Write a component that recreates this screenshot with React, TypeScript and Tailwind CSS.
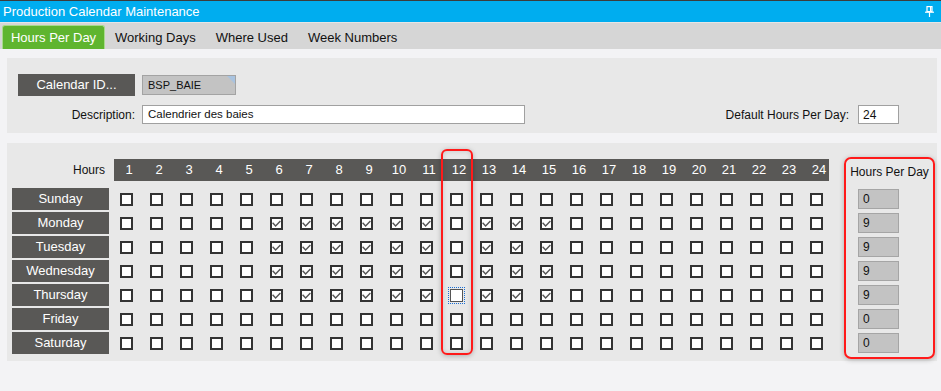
import clsx from "clsx";

const DAYS = ["Sunday", "Monday", "Tuesday", "Wednesday", "Thursday", "Friday", "Saturday"];
const HOURS = Array.from({ length: 24 }, (_, i) => i + 1);
const WORK_HOURS = [6, 7, 8, 9, 10, 11, 13, 14, 15];
const TOTALS = [0, 9, 9, 9, 9, 0, 0];
const TABS = ["Hours Per Day", "Working Days", "Where Used", "Week Numbers"];

function isChecked(day: number, hour: number) {
  return day >= 1 && day <= 4 && WORK_HOURS.includes(hour);
}

function PinIcon() {
  return (
    <svg width="9" height="11" viewBox="0 0 9 11" fill="none" stroke="white" strokeWidth="1.2">
      <rect x="2" y="0.6" width="5" height="5" />
      <line x1="5.6" y1="0.6" x2="5.6" y2="5.6" />
      <line x1="0" y1="6.2" x2="9" y2="6.2" />
      <line x1="4.5" y1="6.2" x2="4.5" y2="11" />
    </svg>
  );
}

function CheckBox({ checked, focused }: { checked: boolean; focused?: boolean }) {
  return (
    <span
      className={clsx(
        "flex h-[13px] w-[13px] items-center justify-center bg-white",
        focused
          ? "border border-[#555] outline-1 outline-offset-1 outline-dotted outline-[#1a6fd6]"
          : "border-2 border-[#333]"
      )}
    >
      {checked && (
        <svg viewBox="0 0 9 9" className="h-[9px] w-[9px]">
          <path d="M0.6 3.8 L3.6 7 L8.4 2" fill="none" stroke="#555" strokeWidth="1.4" />
        </svg>
      )}
    </span>
  );
}

export default function App() {
  return (
    <div className="h-[391px] w-[941px] overflow-hidden bg-[#f3f3f5] font-['Liberation_Sans',Arial,sans-serif] text-[#111]">
      <div className="h-px bg-[#3c3c3c]" />
      <div className="flex h-[21px] items-center justify-between bg-[#00adef] pl-[3px] pr-[7px] text-[13px] text-white">
        <span>Production Calendar Maintenance</span>
        <PinIcon />
      </div>
      <div className="h-px bg-[#e6e6e6]" />

      {/* tabs */}
      <div className="flex h-[26px] items-end bg-[#d6d6d6] pl-[2px]">
        {TABS.map((tab, i) =>
          i === 0 ? (
            <div
              key={tab}
              className="flex h-[24px] w-[103px] items-center justify-center rounded-t-[3px] border border-b-0 border-[#a8da8c] bg-[#5fb52f] text-[13px] text-white"
            >
              {tab}
            </div>
          ) : (
            <div key={tab} className="flex h-[24px] items-center px-[10px] pt-[2px] text-[13px] text-[#111]">
              {tab}
            </div>
          )
        )}
      </div>

      <div className="pl-[7px] pr-[4px] pt-[9px]">
        {/* header form */}
        <div className="h-[75px] bg-[#e8e8e8] pl-[11px] pt-[16px]">
          <div className="flex items-start">
            <div className="flex h-[22px] w-[117px] items-center justify-center bg-[#595856] text-[13px] text-white">
              Calendar ID...
            </div>
            <div className="relative ml-[7px] mt-px flex h-[20px] w-[94px] items-center border border-[#a3a3a3] bg-[#c3c3c3] pl-[5px] text-[11px]">
              BSP_BAIE
              <span className="absolute right-0 top-0 h-0 w-0 border-l-[8px] border-t-[8px] border-l-transparent border-t-[#a9c3df]" />
            </div>
          </div>
          <div className="mt-[9px] flex items-center pr-[38px]">
            <div className="w-[117px] text-right text-[12px]">Description:</div>
            <div className="ml-[7px] flex h-[19px] w-[383px] items-center border border-[#a0a0a0] bg-white pl-[5px] text-[11.5px]">
              Calendrier des baies
            </div>
            <div className="flex-1" />
            <div className="text-[12px]">Default Hours Per Day:</div>
            <div className="ml-[9px] flex h-[19px] w-[41px] items-center border border-[#a0a0a0] bg-white pl-[4px] text-[12px]">
              24
            </div>
          </div>
        </div>

        {/* hours grid */}
        <div className="relative mt-[10px] flex h-[218px] bg-[#e8e8e8]">
          <div className="pl-[5px] pt-[16px]">
            <div className="flex h-[22px] items-center">
              <div className="w-[102px] pr-[9px] text-right text-[12px]">Hours</div>
              <div className="flex h-full w-[715px] overflow-hidden bg-[#595856]">
                {HOURS.map((h) => (
                  <div key={h} className="flex w-[30px] shrink-0 items-center justify-center text-[13px] text-white">
                    {h}
                  </div>
                ))}
              </div>
            </div>
            <div className="mt-[7px] flex flex-col gap-[2px]">
              {DAYS.map((day, d) => (
                <div key={day} className="flex h-[22px] items-center">
                  <div className="flex h-full w-[97px] items-center justify-center bg-[#595856] text-[13px] text-white">
                    {day}
                  </div>
                  <div className="ml-[5px] flex">
                    {HOURS.map((h) => (
                      <div key={h} className="w-[30px] pl-[6px]">
                        <CheckBox checked={isChecked(d, h)} focused={d === 4 && h === 12} />
                      </div>
                    ))}
                  </div>
                </div>
              ))}
            </div>
          </div>

          <div className="ml-[10px] mt-[14px] h-[202px] w-[91px] rounded-[7px] border-2 border-[#ff1a1a] shadow-[0_1px_5px_rgba(0,0,0,0.25)]">
            <div className="pt-[5px] text-center text-[12px] leading-[16px]">Hours Per Day</div>
            <div className="mt-[9px] flex flex-col gap-[4px] pl-[12px]">
              {TOTALS.map((t, i) => (
                <div
                  key={i}
                  className="flex h-[20px] w-[41px] items-center border border-[#a5a5a5] bg-[#c3c3c3] pl-[4px] text-[12px]"
                >
                  {t}
                </div>
              ))}
            </div>
          </div>

          {/* highlight around hour 12 */}
          <div className="pointer-events-none absolute left-[434px] top-[6px] h-[206px] w-[32px] rounded-[6px] border-2 border-[#ff1a1a] shadow-[0_1px_5px_rgba(0,0,0,0.25),inset_0_0_5px_rgba(0,0,0,0.15)]" />
        </div>
      </div>
    </div>
  );
}
